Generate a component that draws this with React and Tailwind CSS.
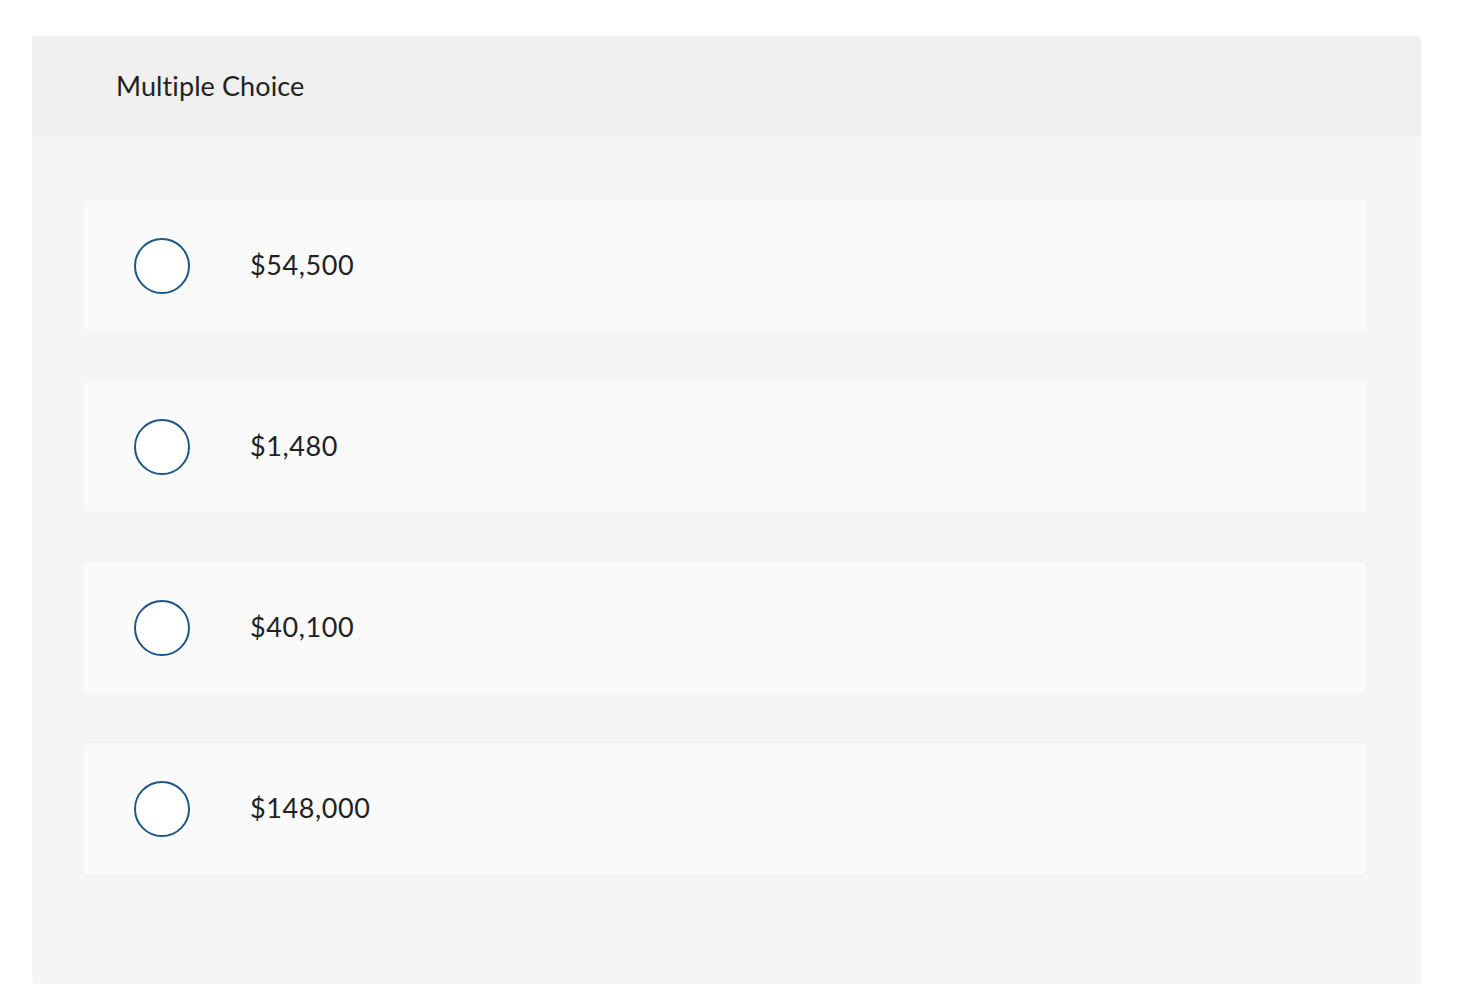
import React from 'react';

const options = ['$54,500', '$1,480', '$40,100', '$148,000'];

const Option = ({ label }) => {
  return (
    <label className="flex items-center h-[131px] bg-[#fafafa] rounded-[4px] cursor-pointer">
      <span className="ml-[50px] w-[56px] h-[56px] rounded-full border-2 border-[#1f5688] bg-white shrink-0" />
      <span className="ml-[60px] text-[27px] text-[#222222] tracking-[0.6px]">{label}</span>
    </label>
  );
};

const App = () => {
  return (
    <div className="min-h-screen bg-white pt-[36px] pl-[32px] pr-[63px]" style={{ fontFamily: '"Lato", "Open Sans", sans-serif' }}>
      <div className="w-[1389px] h-[948px] bg-[#f5f5f5] rounded-[4px] overflow-hidden">
        <div className="h-[100px] bg-[#f0f0f0] flex items-center pl-[84px]">
          <h2 className="text-[27px] text-[#222222] tracking-[0.1px]">Multiple Choice</h2>
        </div>
        <div className="pt-[64px] pl-[52px] pr-[56px] flex flex-col gap-[50px]">
          {options.map((o) => (
            <Option key={o} label={o} />
          ))}
        </div>
      </div>
    </div>
  );
};

export default App;
